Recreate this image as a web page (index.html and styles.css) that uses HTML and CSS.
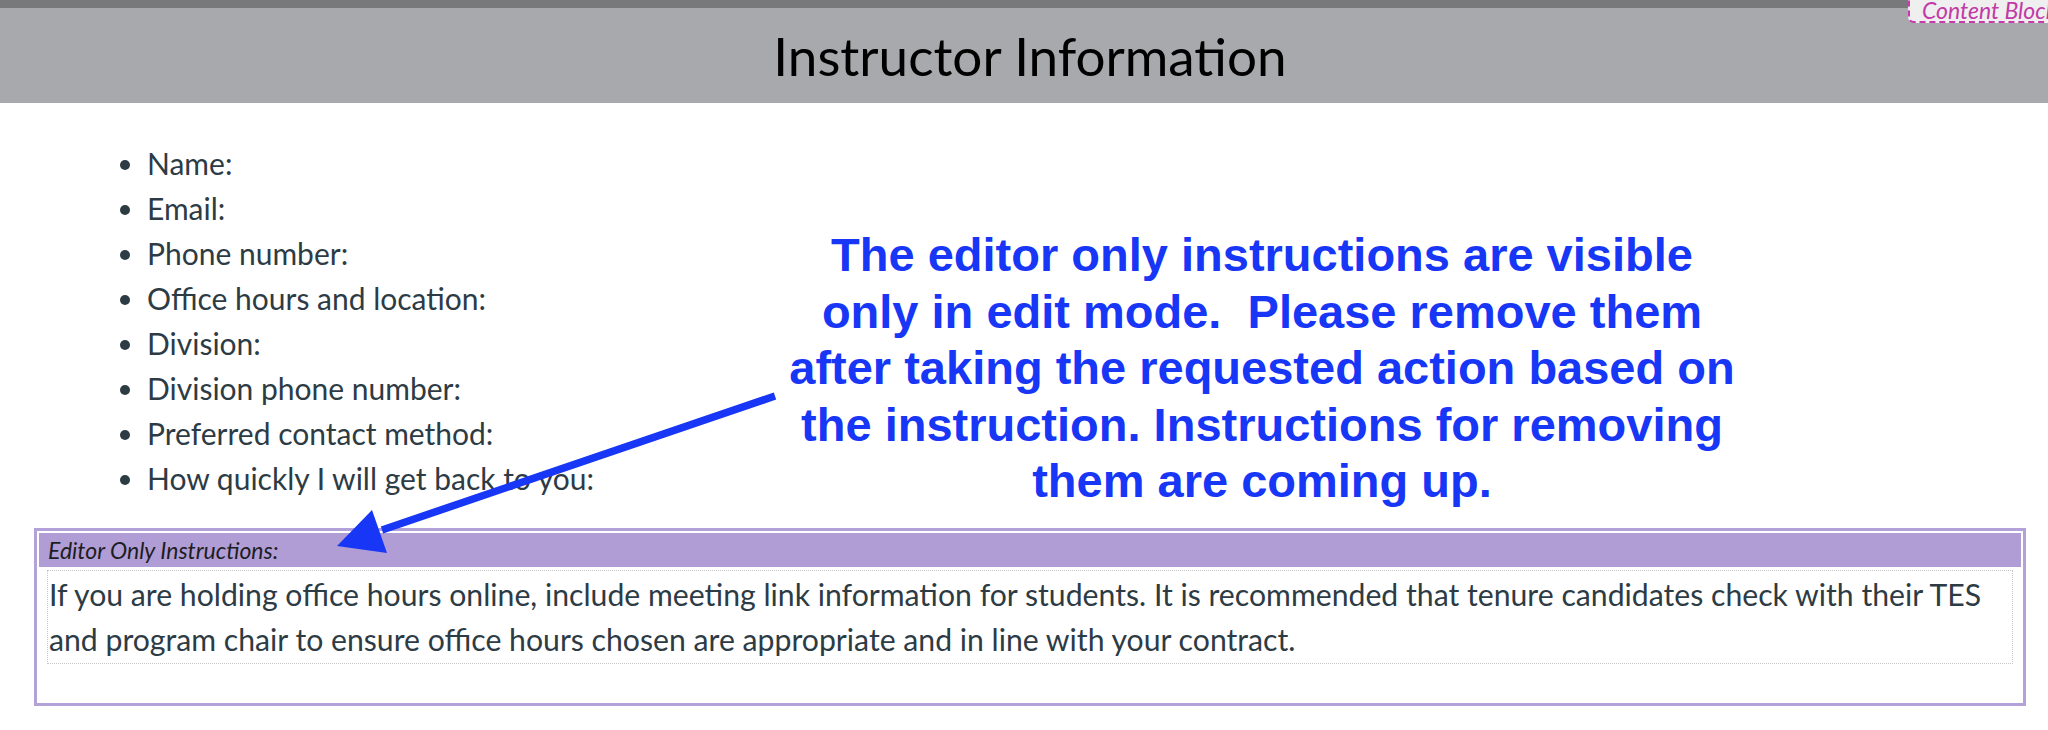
FILE: index.html
```html
<!DOCTYPE html>
<html lang="en">
<head>
<meta charset="utf-8">
<title>Instructor Information</title>
<link rel="stylesheet" href="styles.css">
</head>
<body>
<div class="topbar"></div>
<div class="cb-label">Content Block</div>
<header class="banner"><h2 class="banner-title">Instructor Information</h2></header>
<main class="content">
  <ul class="info-list">
    <li>Name:</li>
    <li>Email:</li>
    <li>Phone number:</li>
    <li>Office hours and location:</li>
    <li>Division:</li>
    <li>Division phone number:</li>
    <li>Preferred contact method:</li>
    <li>How quickly I will get back to you:</li>
  </ul>
  <section class="editor-box">
    <div class="editor-head">Editor Only Instructions:</div>
    <div class="editor-body">
      <p>If you are holding office hours online, include meeting link information for students. It is recommended that tenure candidates check with their TES and program chair to ensure office hours chosen are appropriate and in line with your contract.</p>
    </div>
  </section>
</main>
<div class="annotation">The editor only instructions are visible<br>only in edit mode.&nbsp; Please remove them<br>after taking the requested action based on<br>the instruction. Instructions for removing<br>them are coming up.</div>
<svg class="arrow" width="2048" height="730" viewBox="0 0 2048 730" xmlns="http://www.w3.org/2000/svg">
  <line x1="775" y1="396" x2="382" y2="530" stroke="#1836f5" stroke-width="7.5"/>
  <polygon points="337,546 372,510 387,553" fill="#1836f5"/>
</svg>
</body>
</html>
```
FILE: styles.css
```css
html, body {
  margin: 0;
  padding: 0;
  background: #ffffff;
}
body {
  position: relative;
  width: 2048px;
  height: 730px;
  overflow: hidden;
  font-family: Lato, "Noto Sans", sans-serif;
  color: #2d3b45;
}
.topbar {
  height: 8px;
  background: #78797b;
}
.banner {
  background: #a8a9ac;
  height: 95px;
  padding: 0 22px 0 34px;
  box-sizing: border-box;
}
.banner-title {
  margin: 0;
  padding-top: 16px;
  font-family: Lato, sans-serif;
  font-weight: 400;
  font-size: 53px;
  line-height: 63.6px;
  color: #000000;
  text-align: center;
}
.content {
  padding: 0 22px 0 34px;
}
.info-list {
  margin: 38px 0 0;
  padding-left: 113px;
  font-size: 30px;
  line-height: 45px;
}
.editor-box {
  margin-top: 27px;
  border: 3px solid #b3a1da;
  padding: 2px;
}
.editor-head {
  height: 34px;
  box-sizing: border-box;
  padding: 1px 9px;
  background: #b09dd6;
  font-style: italic;
  font-size: 23px;
  line-height: 32px;
  color: #1d1d1f;
}
.editor-body {
  margin: 3px 8px 37px 8px;
  border: 1px dotted #c6c6c6;
  padding: 1px 0 1px 1px;
}
.editor-body p {
  margin: 0;
  font-size: 30.2px;
  line-height: 45px;
}
.cb-label {
  position: absolute;
  top: -4px;
  left: 1908px;
  padding: 3px 40px 0 12px;
  background: #efeff0;
  border-left: 2px dashed #c83aa9;
  border-bottom: 2px dashed #c83aa9;
  border-bottom-left-radius: 6px;
  font-style: italic;
  font-size: 23px;
  line-height: 22px;
  color: #c23aa6;
  white-space: nowrap;
}
.annotation {
  position: absolute;
  left: 762px;
  top: 227px;
  width: 1000px;
  text-align: center;
  font-family: "Liberation Sans", Arial, sans-serif;
  font-weight: 700;
  font-size: 47px;
  line-height: 56.5px;
  color: #1836f5;
}
.arrow {
  position: absolute;
  left: 0;
  top: 0;
  pointer-events: none;
}
```
